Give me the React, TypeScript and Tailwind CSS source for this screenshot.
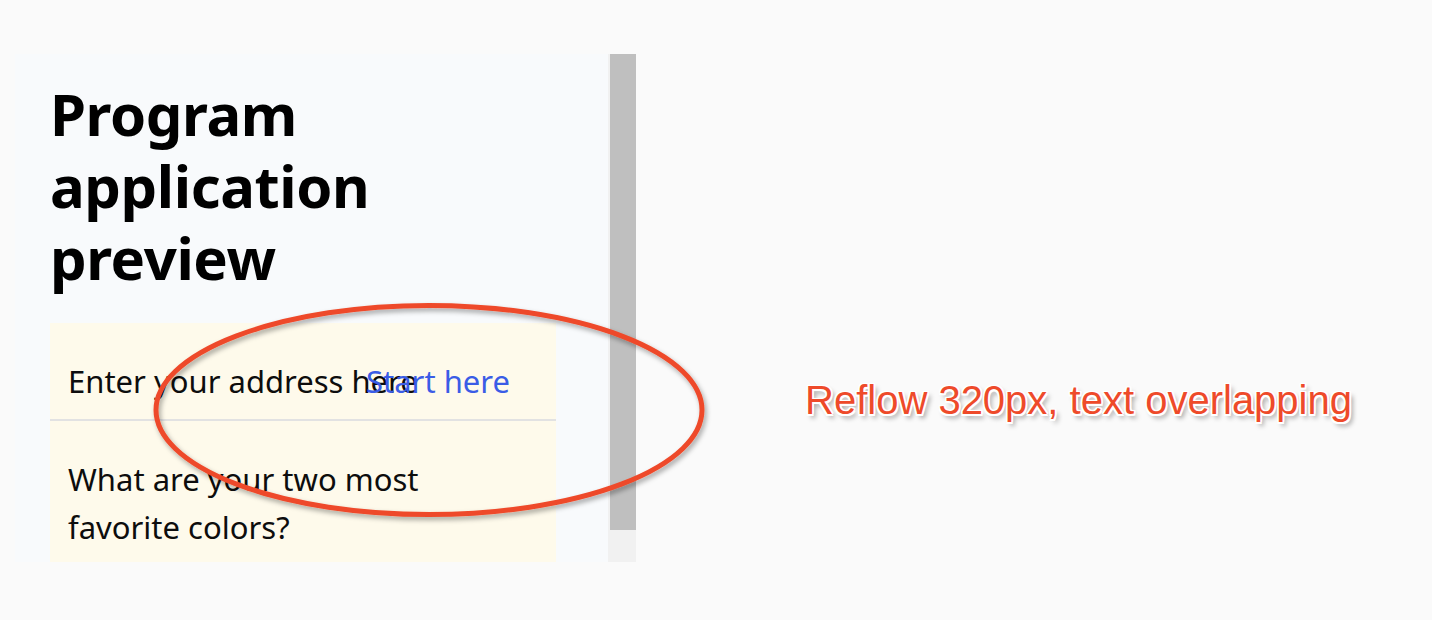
import React from "react";

const panelFont = { fontFamily: '"Noto Sans", "Open Sans", sans-serif' };

function AnnotationEllipse() {
  return (
    <svg
      className="absolute inset-0 pointer-events-none"
      width="1432"
      height="620"
      viewBox="0 0 1432 620"
    >
      <defs>
        <filter id="shadow" x="-20%" y="-20%" width="140%" height="140%">
          <feDropShadow dx="2" dy="3" stdDeviation="2.5" floodColor="#000" floodOpacity="0.35" />
        </filter>
      </defs>
      <ellipse
        cx="429"
        cy="410"
        rx="273"
        ry="104.5"
        fill="none"
        stroke="#ee4a2a"
        strokeWidth="5"
        filter="url(#shadow)"
      />
    </svg>
  );
}

export default function App() {
  return (
    <div className="relative w-[1432px] h-[620px] bg-[#fafafa] overflow-hidden">
      <div className="flex items-start pt-[54px] pl-[15px]">
        {/* preview panel */}
        <div className="w-[593px] h-[508px] bg-[#f8fafc] overflow-hidden pl-[35px] pt-[24px]" style={panelFont}>
          <h1 className="text-[58px] leading-[72px] font-bold text-black tracking-[-0.4px]">
            Program
            <br />
            application
            <br />
            preview
          </h1>
          <div className="mt-[29px] w-[506px] bg-[#fefaeb] text-[31px] leading-[48px] text-[#0d0d0d]">
            <div className="flex pl-[18px] pt-[34px] pb-[14px] border-b-2 border-[#e2e2e2]">
              <span className="w-[298px] shrink-0 whitespace-nowrap">Enter your address here</span>
              <a className="text-[#3a5ce6] whitespace-nowrap">Start here</a>
            </div>
            <div className="pl-[18px] pt-[34px] pr-[80px] pb-[20px]">
              What are your two most favorite colors?
            </div>
          </div>
        </div>

        {/* scrollbar */}
        <div className="w-[28px] h-[508px] bg-[#f1f1f1] flex flex-col">
          <div className="ml-[2px] h-[476px] bg-[#bfbfbf]" />
        </div>

        <p
          className="ml-[169px] mt-[323px] text-[40px] leading-[46px] text-[#ee4a2a] whitespace-nowrap [text-shadow:1.5px_0_0_#fff,-1.5px_0_0_#fff,0_1.5px_0_#fff,0_-1.5px_0_#fff,1.5px_1.5px_0_#fff,-1.5px_-1.5px_0_#fff,1.5px_-1.5px_0_#fff,-1.5px_1.5px_0_#fff,0_0_3px_#fff,3px_4px_5px_rgba(0,0,0,0.4)]"
          style={{ fontFamily: '"Liberation Sans", Arial, sans-serif' }}
        >
          Reflow 320px, text overlapping
        </p>
      </div>
      <AnnotationEllipse />
    </div>
  );
}
